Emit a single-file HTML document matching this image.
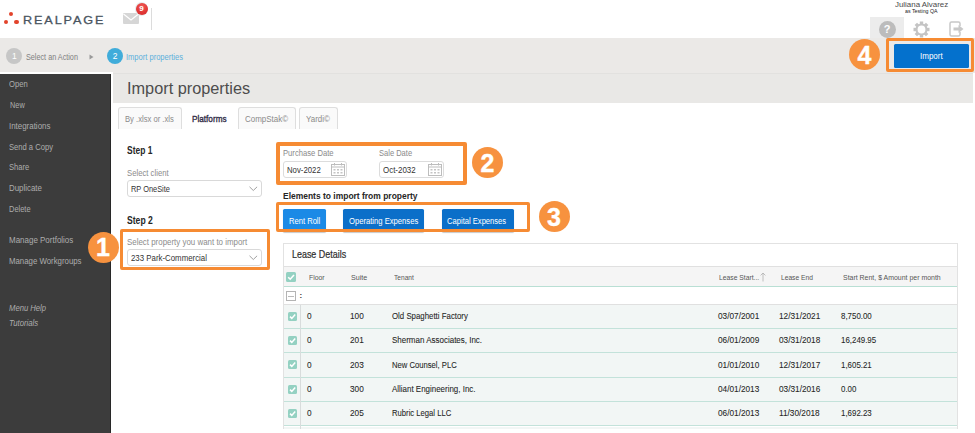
<!DOCTYPE html>
<html><head><meta charset="utf-8">
<style>
*{box-sizing:border-box;margin:0;padding:0}
html,body{width:975px;height:433px;overflow:hidden;background:#fff;font-family:"Liberation Sans",sans-serif;position:relative}
.a{position:absolute;white-space:nowrap}
.t{position:absolute;white-space:nowrap;line-height:1;transform-origin:0 0}
.orange{border:3.5px solid #f68b33;border-radius:2px}
.num{position:absolute;width:31px;height:31px;border-radius:50%;background:#f7923f;color:#fff;font-weight:700;font-size:25px;line-height:33.4px;text-align:center;-webkit-text-stroke:0.4px #fff}
.side{color:#c0c0c0;font-size:8px;left:9px}
.btn{position:absolute;height:23.2px;top:208.6px;border-radius:1.5px;box-shadow:0 1px 1px rgba(0,0,0,.22)}
.sel{position:absolute;border:1px solid #d9d9d9;border-radius:3px;background:#fff}
.chk{position:absolute;width:9px;height:9px;background:#94d1c2;border-radius:1.5px}
.chk svg{position:absolute;left:0;top:0}
.row{position:absolute;left:284px;width:673px;height:24px;background:#f2f6f5;border-bottom:1px solid #c3e2da}
.row .t{font-size:8px;color:#333}
</style></head><body>

<!-- header -->
<div class="a" style="left:0;top:0;width:975px;height:38px;background:#fff"></div>
<!-- logo dots -->
<div class="a" style="left:9.2px;top:11.9px;width:4.3px;height:4.3px;border-radius:50%;background:#e2432b"></div>
<div class="a" style="left:4.1px;top:19.8px;width:4.3px;height:4.3px;border-radius:50%;background:#e2432b"></div>
<div class="a" style="left:14.3px;top:19.8px;width:4.3px;height:4.3px;border-radius:50%;background:#e2432b"></div>
<div class="t" style="left:23.3px;top:14.5px;font-size:11.3px;font-weight:400;letter-spacing:1.68px;color:#4a5560;-webkit-text-stroke:0.28px #4a5560;transform:scaleX(1.12);transform-origin:0 0">REALPAGE</div>
<!-- mail -->
<div class="a" style="left:123px;top:13px;width:16px;height:11px;background:#d6d6d6;border-radius:1px"></div>
<svg class="a" style="left:123px;top:13px" width="16" height="11"><polyline points="0.5,1 8,7 15.5,1" fill="none" stroke="#fff" stroke-width="1.2"/></svg>
<div class="a" style="left:134.8px;top:2.2px;width:13.6px;height:13.6px;border-radius:50%;background:#e6ebeb"></div>
<div class="a" style="left:135.6px;top:3px;width:12px;height:12px;border-radius:50%;background:radial-gradient(circle at 50% 30%,#f15a55,#e03535 60%,#d42c2c);color:#fff;font-weight:700;font-size:8px;line-height:12.5px;text-align:center">9</div>
<div class="a" style="left:151px;top:8px;width:1px;height:22px;background:#dcdcdc"></div>

<!-- user -->
<div class="a" style="left:870px;top:17px;width:34px;height:21px;background:#ececec"></div>
<div class="a" style="left:878.5px;top:21px;width:17px;height:17px;border-radius:50%;background:#bcbcbc;color:#fff;font-weight:700;font-size:11px;line-height:17.5px;text-align:center">?</div>
<svg class="a" style="left:913px;top:21px" width="17" height="17" viewBox="0 0 17 17">
 <g fill="#c4c4c4" transform="translate(8.5,8.5)">
  <rect x="-1.7" y="-8" width="3.4" height="3"/>
  <rect x="-1.7" y="-8" width="3.4" height="3" transform="rotate(45)"/>
  <rect x="-1.7" y="-8" width="3.4" height="3" transform="rotate(90)"/>
  <rect x="-1.7" y="-8" width="3.4" height="3" transform="rotate(135)"/>
  <rect x="-1.7" y="-8" width="3.4" height="3" transform="rotate(180)"/>
  <rect x="-1.7" y="-8" width="3.4" height="3" transform="rotate(225)"/>
  <rect x="-1.7" y="-8" width="3.4" height="3" transform="rotate(270)"/>
  <rect x="-1.7" y="-8" width="3.4" height="3" transform="rotate(315)"/>
  <circle r="6"/>
 </g>
 <circle cx="8.5" cy="8.5" r="3.9" fill="#fff"/>
</svg>
<svg class="a" style="left:949px;top:21px" width="16" height="16" viewBox="0 0 16 16">
 <path d="M11 5 V2.5 Q11 1 9.5 1 H2.5 Q1 1 1 2.5 V13.5 Q1 15 2.5 15 H9.5 Q11 15 11 13.5 V11" fill="none" stroke="#c8c8c8" stroke-width="1.5"/>
 <path d="M4.5 6.5 H9.5 V4 L14.5 8 L9.5 12 V9.5 H4.5 Z" fill="#c8c8c8"/>
</svg>

<!-- step bar -->
<div class="a" style="left:0;top:38px;width:975px;height:35px;background:#ebe9e7"></div>
<div class="a" style="left:6.3px;top:48.2px;width:16px;height:16px;border-radius:50%;background:#c6c6c6;color:#fff;font-size:8.5px;line-height:16.5px;text-align:center">1</div>
<svg class="a" style="left:89px;top:54px" width="5" height="6"><path d="M0.5 0.5 L4.5 3 L0.5 5.5Z" fill="#9a9a9a"/></svg>
<div class="a" style="left:107.2px;top:48.2px;width:16px;height:16px;border-radius:50%;background:#40acda;color:#fff;font-size:8.5px;line-height:16.5px;text-align:center">2</div>

<!-- import button -->
<div class="a orange" style="left:886px;top:38px;width:88px;height:34px"></div>
<div class="a" style="left:894px;top:44px;width:75px;height:24px;background:#0471cd;border-radius:1.5px;"></div>
<div class="num" style="left:849px;top:39px;line-height:33.2px">4</div>

<!-- sidebar -->
<div class="a" style="left:0;top:72px;width:113px;height:361px;background:#fff"></div>
<div class="a" style="left:0;top:73.5px;width:111.3px;height:360px;background:#3c3c3c;border-right:1.2px solid #282828"></div>

<!-- title -->
<div class="a" style="left:113px;top:73px;width:860px;height:30px;background:#e9e8e6;border-top:1.2px solid #e2e1df"></div>

<!-- tabs -->
<div class="a" style="left:118px;top:107px;width:63.5px;height:22px;background:#fafafa;border:1px solid #dedede;border-bottom:none;border-radius:3px 3px 0 0"></div>
<div class="a" style="left:238px;top:107px;width:57.5px;height:22px;background:#fafafa;border:1px solid #dedede;border-bottom:none;border-radius:3px 3px 0 0"></div>
<div class="a" style="left:298.8px;top:107px;width:38.8px;height:22px;background:#fafafa;border:1px solid #dedede;border-bottom:none;border-radius:3px 3px 0 0"></div>

<!-- step 1 / 2 -->
<div class="sel" style="left:126.8px;top:180.2px;width:134.8px;height:17px"></div>
<svg class="a" style="left:248.8px;top:186.3px" width="9" height="6"><polyline points="0.5,0.8 4.3,4.5 8.1,0.8" fill="none" stroke="#a0a0a0" stroke-width="1"/></svg>

<div class="a orange" style="left:120px;top:228.5px;width:149.5px;height:41px"></div>
<div class="sel" style="left:126.8px;top:249px;width:134.8px;height:16.5px"></div>
<svg class="a" style="left:248.8px;top:254.8px" width="9" height="6"><polyline points="0.5,0.8 4.3,4.5 8.1,0.8" fill="none" stroke="#a0a0a0" stroke-width="1"/></svg>
<div class="num" style="left:87.5px;top:232px;line-height:31.8px">1</div>

<!-- dates -->
<div class="a orange" style="left:276px;top:142px;width:190.5px;height:43px;border-width:4px"></div>
<div class="sel" style="left:283px;top:161px;width:64px;height:17px;border-color:#dcdcdc"></div>
<svg class="a cal" style="left:331px;top:163px" width="14" height="13" viewBox="0 0 14 13">
 <rect x="0.5" y="1.5" width="13" height="11" fill="#fff" stroke="#bdbdbd" stroke-width="1"/>
 <line x1="0.5" y1="4" x2="13.5" y2="4" stroke="#bdbdbd"/>
 <line x1="3.5" y1="0" x2="3.5" y2="2.5" stroke="#bdbdbd"/><line x1="10.5" y1="0" x2="10.5" y2="2.5" stroke="#bdbdbd"/>
 <g fill="#c4c4c4"><rect x="2.5" y="6" width="2" height="1.5"/><rect x="6" y="6" width="2" height="1.5"/><rect x="9.5" y="6" width="2" height="1.5"/><rect x="2.5" y="9" width="2" height="1.5"/><rect x="6" y="9" width="2" height="1.5"/><rect x="9.5" y="9" width="2" height="1.5"/></g>
</svg>
<div class="sel" style="left:379px;top:161px;width:64.5px;height:17px;border-color:#dcdcdc"></div>
<svg class="a cal" style="left:427.5px;top:163px" width="14" height="13" viewBox="0 0 14 13">
 <rect x="0.5" y="1.5" width="13" height="11" fill="#fff" stroke="#bdbdbd" stroke-width="1"/>
 <line x1="0.5" y1="4" x2="13.5" y2="4" stroke="#bdbdbd"/>
 <line x1="3.5" y1="0" x2="3.5" y2="2.5" stroke="#bdbdbd"/><line x1="10.5" y1="0" x2="10.5" y2="2.5" stroke="#bdbdbd"/>
 <g fill="#c4c4c4"><rect x="2.5" y="6" width="2" height="1.5"/><rect x="6" y="6" width="2" height="1.5"/><rect x="9.5" y="6" width="2" height="1.5"/><rect x="2.5" y="9" width="2" height="1.5"/><rect x="6" y="9" width="2" height="1.5"/><rect x="9.5" y="9" width="2" height="1.5"/></g>
</svg>
<div class="num" style="left:472px;top:147px">2</div>

<!-- elements -->
<div class="btn" style="left:283px;width:42.5px;background:#1b8ae6"></div>
<div class="btn" style="left:343px;width:81px;background:#0b6fc9"></div>
<div class="btn" style="left:441.5px;width:72px;background:#0b6fc9"></div>
<div class="a orange" style="left:276px;top:201.9px;width:254px;height:30.2px;border-width:3.6px"></div>
<div class="num" style="left:538.5px;top:201px">3</div>

<!-- table -->
<div class="a" style="left:283px;top:243px;width:675px;height:186px;border:1px solid #e2e2e2;background:#fff"></div>
<div class="a" style="left:284px;top:266.4px;width:673px;height:20.6px;background:#f5f5f5;border-top:1.5px solid #e0e0e0;border-bottom:1.5px solid #b9dfd4"></div>
<div class="chk" style="left:286.3px;top:272px;width:9.8px;height:10px"><svg width="10" height="10"><polyline points="2.2,5.2 4.2,7.2 8,3" fill="none" stroke="#fff" stroke-width="1.6"/></svg></div>
<svg class="a" style="left:760px;top:272px" width="6" height="10"><path d="M3 1 V9.5 M0.6 3.4 L3 1 L5.4 3.4" fill="none" stroke="#b0b0b0" stroke-width="0.8"/></svg>
<!-- filter row -->
<div class="a" style="left:284px;top:287px;width:673px;height:17.5px;background:#fff;border-bottom:1.5px solid #e0e0e0"></div>
<div class="a" style="left:285.9px;top:291px;width:10.6px;height:10px;border:1px solid #b4b4b4;background:#fff"></div>
<div class="a" style="left:288px;top:295.5px;width:6.4px;height:1px;background:#bababa"></div>
<div class="t" style="left:299.5px;top:292px;font-size:8px;font-weight:700;color:#333">:</div>

<div class="row" style="top:304.50px;height:24.60px"></div>
<div class="row" style="top:329.10px;height:24.25px"></div>
<div class="row" style="top:353.35px;height:24.25px"></div>
<div class="row" style="top:377.60px;height:24.25px"></div>
<div class="row" style="top:401.85px;height:24.25px"></div>
<div class="a" style="left:284px;top:426.1px;width:673px;height:2.6px;background:#f2f6f5;border-top:0.8px solid #fff"></div>
<div class="a" style="left:300px;top:304.5px;width:1px;height:124px;background:#d8dcdc"></div>

<div class="chk" style="left:287.6px;top:311.90px"><svg width="9" height="9"><polyline points="2,4.6 3.8,6.4 7.2,2.6" fill="none" stroke="#fff" stroke-width="1.5"/></svg></div>
<div class="chk" style="left:287.6px;top:336.15px"><svg width="9" height="9"><polyline points="2,4.6 3.8,6.4 7.2,2.6" fill="none" stroke="#fff" stroke-width="1.5"/></svg></div>
<div class="chk" style="left:287.6px;top:360.40px"><svg width="9" height="9"><polyline points="2,4.6 3.8,6.4 7.2,2.6" fill="none" stroke="#fff" stroke-width="1.5"/></svg></div>
<div class="chk" style="left:287.6px;top:384.65px"><svg width="9" height="9"><polyline points="2,4.6 3.8,6.4 7.2,2.6" fill="none" stroke="#fff" stroke-width="1.5"/></svg></div>
<div class="chk" style="left:287.6px;top:408.90px"><svg width="9" height="9"><polyline points="2,4.6 3.8,6.4 7.2,2.6" fill="none" stroke="#fff" stroke-width="1.5"/></svg></div>
<div class="t" style="left:895.40px;top:0.81px;font-size:8.0px;color:#4a4a4a;transform:scaleX(0.988)">Juliana Alvarez</div>
<div class="t" style="left:905.40px;top:9.01px;font-size:5.4px;color:#222;transform:scaleX(0.972)">as Testing QA</div>
<div class="t" style="left:25.60px;top:52.50px;font-size:8.8px;color:#808080;transform:scaleX(0.823)">Select an Action</div>
<div class="t" style="left:126.20px;top:52.50px;font-size:8.8px;color:#5cb0dc;transform:scaleX(0.857)">Import properties</div>
<div class="t" style="left:919.90px;top:51.01px;font-size:9.4px;color:#fff;transform:scaleX(0.853)">Import</div>
<div class="t" style="left:9.20px;top:80.41px;font-size:8.7px;color:#adadad;transform:scaleX(0.882)">Open</div>
<div class="t" style="left:9.70px;top:101.11px;font-size:8.7px;color:#adadad;transform:scaleX(0.845)">New</div>
<div class="t" style="left:9.20px;top:121.91px;font-size:8.7px;color:#adadad;transform:scaleX(0.912)">Integrations</div>
<div class="t" style="left:9.20px;top:142.61px;font-size:8.7px;color:#adadad;transform:scaleX(0.875)">Send a Copy</div>
<div class="t" style="left:9.20px;top:163.31px;font-size:8.7px;color:#adadad;transform:scaleX(0.874)">Share</div>
<div class="t" style="left:9.20px;top:184.11px;font-size:8.7px;color:#adadad;transform:scaleX(0.907)">Duplicate</div>
<div class="t" style="left:9.20px;top:204.91px;font-size:8.7px;color:#adadad;transform:scaleX(0.858)">Delete</div>
<div class="t" style="left:9.20px;top:236.01px;font-size:8.7px;color:#adadad;transform:scaleX(0.918)">Manage Portfolios</div>
<div class="t" style="left:9.20px;top:256.91px;font-size:8.7px;color:#adadad;transform:scaleX(0.901)">Manage Workgroups</div>
<div class="t" style="left:9.20px;top:303.81px;font-size:8.7px;color:#adadad;font-style:italic;transform:scaleX(0.882)">Menu Help</div>
<div class="t" style="left:9.20px;top:318.81px;font-size:8.7px;color:#adadad;font-style:italic;transform:scaleX(0.894)">Tutorials</div>
<div class="t" style="left:126.51px;top:80.20px;font-size:16.4px;color:#4d4d4d;transform:scaleX(0.994)">Import properties</div>
<div class="t" style="left:125.10px;top:113.61px;font-size:9.4px;color:#8a8a8a;transform:scaleX(0.814)">By .xlsx or .xls</div>
<div class="t" style="left:192.30px;top:113.61px;font-size:9.4px;color:#2f2b45;transform:scaleX(0.872);-webkit-text-stroke:0.35px #2f2b45">Platforms</div>
<div class="t" style="left:245.30px;top:113.61px;font-size:9.4px;color:#8a8a8a;transform:scaleX(0.849)">CompStak©</div>
<div class="t" style="left:306.40px;top:113.61px;font-size:9.4px;color:#8a8a8a;transform:scaleX(0.848)">Yardi©</div>
<div class="t" style="left:127.20px;top:146.41px;font-size:10.4px;color:#262626;font-weight:700;transform:scaleX(0.812)">Step 1</div>
<div class="t" style="left:127.30px;top:167.70px;font-size:9.4px;color:#8c8c8c;transform:scaleX(0.824)">Select client</div>
<div class="t" style="left:131.20px;top:184.81px;font-size:9.0px;color:#333;transform:scaleX(0.821)">RP OneSite</div>
<div class="t" style="left:127.20px;top:216.20px;font-size:10.4px;color:#262626;font-weight:700;transform:scaleX(0.828)">Step 2</div>
<div class="t" style="left:127.30px;top:237.20px;font-size:9.4px;color:#8c8c8c;transform:scaleX(0.845)">Select property you want to import</div>
<div class="t" style="left:131.20px;top:253.60px;font-size:9.0px;color:#333;transform:scaleX(0.873)">233 Park-Commercial</div>
<div class="t" style="left:283.00px;top:149.41px;font-size:9.2px;color:#8a8a8a;transform:scaleX(0.831)">Purchase Date</div>
<div class="t" style="left:286.80px;top:165.81px;font-size:9.2px;color:#333;transform:scaleX(0.846)">Nov-2022</div>
<div class="t" style="left:378.90px;top:149.41px;font-size:9.2px;color:#8a8a8a;transform:scaleX(0.820)">Sale Date</div>
<div class="t" style="left:382.60px;top:165.81px;font-size:9.2px;color:#333;transform:scaleX(0.865)">Oct-2032</div>
<div class="t" style="left:283.00px;top:190.60px;font-size:9.8px;color:#262626;font-weight:700;transform:scaleX(0.864)">Elements to import from property</div>
<div class="t" style="left:288.80px;top:216.72px;font-size:9.2px;color:#fff;transform:scaleX(0.827)">Rent Roll</div>
<div class="t" style="left:348.90px;top:216.72px;font-size:9.2px;color:#fff;transform:scaleX(0.832)">Operating Expenses</div>
<div class="t" style="left:447.35px;top:216.72px;font-size:9.2px;color:#fff;transform:scaleX(0.827)">Capital Expenses</div>
<div class="t" style="left:291.60px;top:250.40px;font-size:10.0px;color:#2e2e2e;transform:scaleX(0.893);-webkit-text-stroke:0.2px #2e2e2e">Lease Details</div>
<div class="t" style="left:308.80px;top:274.01px;font-size:7.8px;color:#555;transform:scaleX(0.881)">Floor</div>
<div class="t" style="left:351.20px;top:274.01px;font-size:7.8px;color:#555;transform:scaleX(0.918)">Suite</div>
<div class="t" style="left:394.40px;top:274.01px;font-size:7.8px;color:#555;transform:scaleX(0.846)">Tenant</div>
<div class="t" style="left:719.20px;top:274.01px;font-size:7.8px;color:#555;transform:scaleX(0.866)">Lease Start...</div>
<div class="t" style="left:781.20px;top:274.01px;font-size:7.8px;color:#555;transform:scaleX(0.855)">Lease End</div>
<div class="t" style="left:842.50px;top:274.01px;font-size:7.8px;color:#555;transform:scaleX(0.891)">Start Rent, $ Amount per month</div>
<div class="t" style="left:306.50px;top:312.01px;font-size:9.2px;color:#262626;transform:scaleX(0.898);-webkit-text-stroke:0.08px #262626">0</div>
<div class="t" style="left:349.70px;top:312.01px;font-size:9.2px;color:#262626;transform:scaleX(0.898);-webkit-text-stroke:0.08px #262626">100</div>
<div class="t" style="left:391.90px;top:312.01px;font-size:9.2px;color:#262626;transform:scaleX(0.854);-webkit-text-stroke:0.08px #262626">Old Spaghetti Factory</div>
<div class="t" style="left:717.50px;top:312.01px;font-size:9.2px;color:#262626;transform:scaleX(0.898);-webkit-text-stroke:0.08px #262626">03/07/2001</div>
<div class="t" style="left:779.00px;top:312.01px;font-size:9.2px;color:#262626;transform:scaleX(0.898);-webkit-text-stroke:0.08px #262626">12/31/2021</div>
<div class="t" style="left:840.50px;top:312.01px;font-size:9.2px;color:#262626;transform:scaleX(0.860);-webkit-text-stroke:0.08px #262626">8,750.00</div>
<div class="t" style="left:306.50px;top:336.26px;font-size:9.2px;color:#262626;transform:scaleX(0.898);-webkit-text-stroke:0.08px #262626">0</div>
<div class="t" style="left:349.70px;top:336.26px;font-size:9.2px;color:#262626;transform:scaleX(0.898);-webkit-text-stroke:0.08px #262626">201</div>
<div class="t" style="left:391.90px;top:336.26px;font-size:9.2px;color:#262626;transform:scaleX(0.869);-webkit-text-stroke:0.08px #262626">Sherman Associates, Inc.</div>
<div class="t" style="left:717.50px;top:336.26px;font-size:9.2px;color:#262626;transform:scaleX(0.898);-webkit-text-stroke:0.08px #262626">06/01/2009</div>
<div class="t" style="left:779.00px;top:336.26px;font-size:9.2px;color:#262626;transform:scaleX(0.898);-webkit-text-stroke:0.08px #262626">03/31/2018</div>
<div class="t" style="left:840.50px;top:336.26px;font-size:9.2px;color:#262626;transform:scaleX(0.860);-webkit-text-stroke:0.08px #262626">16,249.95</div>
<div class="t" style="left:306.50px;top:360.51px;font-size:9.2px;color:#262626;transform:scaleX(0.898);-webkit-text-stroke:0.08px #262626">0</div>
<div class="t" style="left:349.70px;top:360.51px;font-size:9.2px;color:#262626;transform:scaleX(0.898);-webkit-text-stroke:0.08px #262626">203</div>
<div class="t" style="left:391.90px;top:360.51px;font-size:9.2px;color:#262626;transform:scaleX(0.834);-webkit-text-stroke:0.08px #262626">New Counsel, PLC</div>
<div class="t" style="left:717.50px;top:360.51px;font-size:9.2px;color:#262626;transform:scaleX(0.898);-webkit-text-stroke:0.08px #262626">01/01/2010</div>
<div class="t" style="left:779.00px;top:360.51px;font-size:9.2px;color:#262626;transform:scaleX(0.898);-webkit-text-stroke:0.08px #262626">12/31/2017</div>
<div class="t" style="left:840.50px;top:360.51px;font-size:9.2px;color:#262626;transform:scaleX(0.860);-webkit-text-stroke:0.08px #262626">1,605.21</div>
<div class="t" style="left:306.50px;top:384.76px;font-size:9.2px;color:#262626;transform:scaleX(0.898);-webkit-text-stroke:0.08px #262626">0</div>
<div class="t" style="left:349.70px;top:384.76px;font-size:9.2px;color:#262626;transform:scaleX(0.898);-webkit-text-stroke:0.08px #262626">300</div>
<div class="t" style="left:391.90px;top:384.76px;font-size:9.2px;color:#262626;transform:scaleX(0.865);-webkit-text-stroke:0.08px #262626">Alliant Engineering, Inc.</div>
<div class="t" style="left:717.50px;top:384.76px;font-size:9.2px;color:#262626;transform:scaleX(0.898);-webkit-text-stroke:0.08px #262626">04/01/2013</div>
<div class="t" style="left:779.00px;top:384.76px;font-size:9.2px;color:#262626;transform:scaleX(0.898);-webkit-text-stroke:0.08px #262626">03/31/2016</div>
<div class="t" style="left:840.50px;top:384.76px;font-size:9.2px;color:#262626;transform:scaleX(0.860);-webkit-text-stroke:0.08px #262626">0.00</div>
<div class="t" style="left:306.50px;top:409.01px;font-size:9.2px;color:#262626;transform:scaleX(0.898);-webkit-text-stroke:0.08px #262626">0</div>
<div class="t" style="left:349.70px;top:409.01px;font-size:9.2px;color:#262626;transform:scaleX(0.898);-webkit-text-stroke:0.08px #262626">205</div>
<div class="t" style="left:391.90px;top:409.01px;font-size:9.2px;color:#262626;transform:scaleX(0.835);-webkit-text-stroke:0.08px #262626">Rubric Legal LLC</div>
<div class="t" style="left:717.50px;top:409.01px;font-size:9.2px;color:#262626;transform:scaleX(0.898);-webkit-text-stroke:0.08px #262626">06/01/2013</div>
<div class="t" style="left:779.00px;top:409.01px;font-size:9.2px;color:#262626;transform:scaleX(0.898);-webkit-text-stroke:0.08px #262626">11/30/2018</div>
<div class="t" style="left:840.50px;top:409.01px;font-size:9.2px;color:#262626;transform:scaleX(0.860);-webkit-text-stroke:0.08px #262626">1,692.23</div>
</body></html>
